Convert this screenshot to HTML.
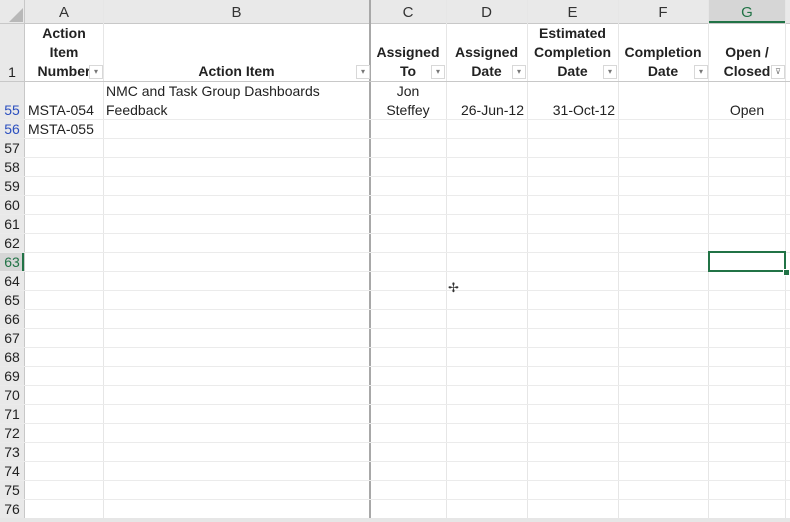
<!DOCTYPE html>
<html><head><meta charset="utf-8"><style>
body{margin:0;width:790px;height:522px;overflow:hidden;background:#fff;font-family:"Liberation Sans",Arial,sans-serif;font-size:14px;color:#222;position:relative}
.a{position:absolute}
.hl{position:absolute;left:0;width:790px;height:1px;background:#ebebeb}
.vl{position:absolute;top:0;height:518px;width:1px;background:#e6e6e6}
.ch{position:absolute;top:0;height:23px;line-height:26px;text-align:center;font-size:15px;color:#333}
.rn{position:absolute;left:0;width:24px;height:19px;line-height:20px;text-align:center;font-size:14px;color:#222}
.hd{position:absolute;top:24px;height:57px;font-weight:bold;text-align:center;line-height:19px;display:flex;align-items:flex-end;justify-content:center}
.fb{position:absolute;top:65px;width:12px;height:12px;border:1px solid #d8d8d8;background:#fff;font-size:8px;line-height:12px;text-align:center;color:#777}
.c{position:absolute;height:19px;line-height:20px}
</style></head><body>
<div class="a" style="left:0;top:0;width:790px;height:23px;background:#e9e9e9"></div>
<div class="a" style="left:0;top:23px;width:24px;height:495px;background:#e9e9e9"></div>
<div class="a" style="left:708px;top:0;width:78px;height:23px;background:#d6d6d6;border-bottom:2px solid #217346;box-sizing:border-box"></div>
<div class="a" style="left:0;top:252px;width:24px;height:19px;background:#d6d6d6;border-right:2px solid #217346;box-sizing:border-box"></div>
<svg class="a" style="left:8px;top:8px" width="16" height="14"><polygon points="15,0 15,14 1,14" fill="#b8b8b8"/></svg>
<div class="a" style="left:0;top:23px;width:790px;height:1px;background:#c8c8c8"></div>
<div class="ch" style="left:25px;width:78px">A</div>
<div class="ch" style="left:103px;width:267px">B</div>
<div class="ch" style="left:370px;width:76px">C</div>
<div class="ch" style="left:446px;width:81px">D</div>
<div class="ch" style="left:527px;width:91px">E</div>
<div class="ch" style="left:618px;width:90px">F</div>
<div class="ch" style="left:708px;width:78px;color:#217346">G</div>
<div class="vl" style="left:24px;background:#c8c8c8"></div>
<div class="vl" style="left:103px"></div>
<div class="vl" style="left:369px;width:2px;background:#a8a8a8"></div>
<div class="vl" style="left:446px"></div>
<div class="vl" style="left:527px"></div>
<div class="vl" style="left:618px"></div>
<div class="vl" style="left:708px"></div>
<div class="vl" style="left:785px"></div>
<div class="hl" style="top:81px;background:#c8c8c8"></div>
<div class="hl" style="top:119px"></div>
<div class="hl" style="top:138px"></div>
<div class="hl" style="top:157px"></div><div class="hl" style="top:176px"></div><div class="hl" style="top:195px"></div><div class="hl" style="top:214px"></div><div class="hl" style="top:233px"></div><div class="hl" style="top:252px"></div><div class="hl" style="top:271px"></div><div class="hl" style="top:290px"></div><div class="hl" style="top:309px"></div><div class="hl" style="top:328px"></div><div class="hl" style="top:347px"></div><div class="hl" style="top:366px"></div><div class="hl" style="top:385px"></div><div class="hl" style="top:404px"></div><div class="hl" style="top:423px"></div><div class="hl" style="top:442px"></div><div class="hl" style="top:461px"></div><div class="hl" style="top:480px"></div><div class="hl" style="top:499px"></div>
<div class="a" style="left:0;top:518px;width:790px;height:4px;background:#e6e6e6"></div>
<div class="rn" style="top:62px">1</div>
<div class="hd" style="left:25px;width:78px">Action<br>Item<br>Number</div>
<div class="hd" style="left:103px;width:267px">Action Item</div>
<div class="hd" style="left:370px;width:76px">Assigned<br>To</div>
<div class="hd" style="left:446px;width:81px">Assigned<br>Date</div>
<div class="hd" style="left:527px;width:91px">Estimated<br>Completion<br>Date</div>
<div class="hd" style="left:618px;width:90px">Completion<br>Date</div>
<div class="hd" style="left:708px;width:78px">Open /<br>Closed</div>
<div class="fb" style="left:89px">▾</div>
<div class="fb" style="left:356px">▾</div>
<div class="fb" style="left:431px">▾</div>
<div class="fb" style="left:512px">▾</div>
<div class="fb" style="left:603px">▾</div>
<div class="fb" style="left:694px">▾</div>
<div class="fb" style="left:771px">⊽</div>
<div class="rn" style="top:100px;color:#2b4fbf">55</div>
<div class="c" style="left:28px;top:100px">MSTA-054</div>
<div class="c" style="left:106px;top:81px">NMC and Task Group Dashboards</div>
<div class="c" style="left:106px;top:100px">Feedback</div>
<div class="c" style="left:370px;width:76px;text-align:center;top:81px">Jon</div>
<div class="c" style="left:370px;width:76px;text-align:center;top:100px">Steffey</div>
<div class="c" style="left:446px;width:78px;text-align:right;top:100px">26-Jun-12</div>
<div class="c" style="left:527px;width:88px;text-align:right;top:100px">31-Oct-12</div>
<div class="c" style="left:708px;width:78px;text-align:center;top:100px">Open</div>
<div class="rn" style="top:119px;color:#2b4fbf">56</div>
<div class="c" style="left:28px;top:119px">MSTA-055</div>
<div class="rn" style="top:138px">57</div><div class="rn" style="top:157px">58</div><div class="rn" style="top:176px">59</div><div class="rn" style="top:195px">60</div><div class="rn" style="top:214px">61</div><div class="rn" style="top:233px">62</div><div class="rn" style="top:252px;color:#217346">63</div><div class="rn" style="top:271px">64</div><div class="rn" style="top:290px">65</div><div class="rn" style="top:309px">66</div><div class="rn" style="top:328px">67</div><div class="rn" style="top:347px">68</div><div class="rn" style="top:366px">69</div><div class="rn" style="top:385px">70</div><div class="rn" style="top:404px">71</div><div class="rn" style="top:423px">72</div><div class="rn" style="top:442px">73</div><div class="rn" style="top:461px">74</div><div class="rn" style="top:480px">75</div><div class="rn" style="top:499px">76</div>
<div class="a" style="left:708px;top:251px;width:78px;height:21px;border:2px solid #217346;box-sizing:border-box"></div>
<div class="a" style="left:783px;top:269px;width:5px;height:5px;background:#217346;border:1px solid #fff"></div>
<div class="a" style="left:448px;top:280px;font-size:13px;color:#333">✢</div>
</body></html>
